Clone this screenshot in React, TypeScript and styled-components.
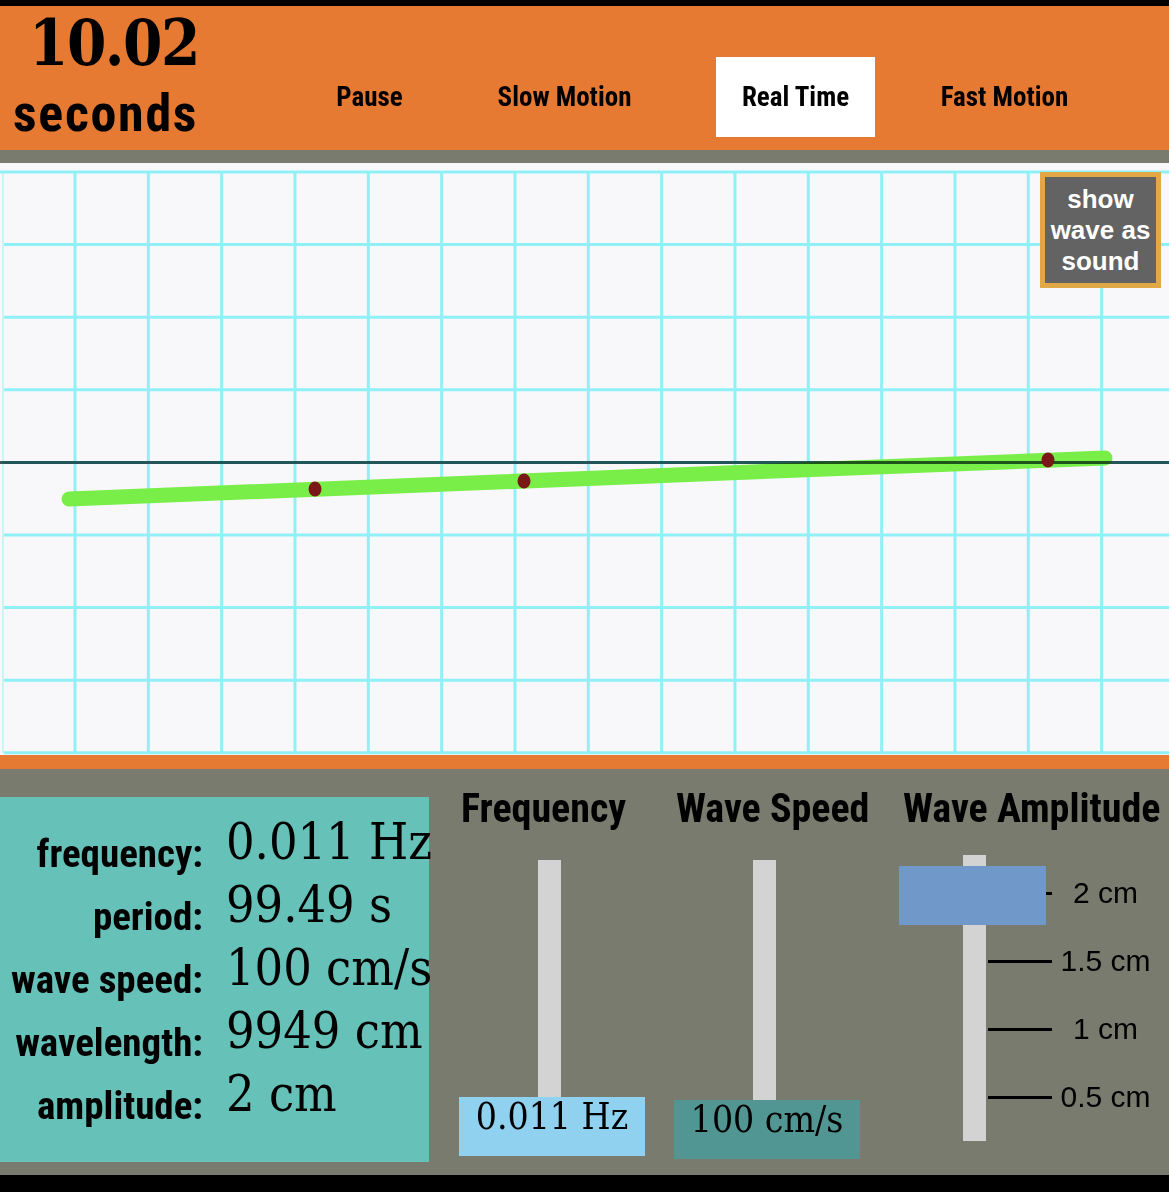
import styled, { createGlobalStyle } from "styled-components";

const NARROW = `"Roboto Condensed", "DejaVu Sans Condensed", "Liberation Sans", sans-serif`;
const SLAB = `"DejaVu Serif Condensed", "DejaVu Serif", "Liberation Serif", serif`;

const GlobalStyle = createGlobalStyle`
  html, body {
    margin: 0;
    padding: 0;
    background: #000;
  }
  body {
    width: 1169px;
    height: 1192px;
    overflow: hidden;
  }
`;

// grid geometry of the wave canvas
const GRID_COLS = Array.from({ length: 15 }, (_, i) => 75 + i * 73.33);
const GRID_ROWS = Array.from({ length: 9 }, (_, i) => 9 + i * 72.6);
const BEADS = [
  { x: 315, y: 326 },
  { x: 524, y: 318 },
  { x: 1048, y: 297 },
];

const readouts = [
  { label: "frequency:", value: "0.011 Hz" },
  { label: "period:", value: "99.49 s" },
  { label: "wave speed:", value: "100 cm/s" },
  { label: "wavelength:", value: "9949 cm" },
  { label: "amplitude:", value: "2 cm" },
];

const amplitudeTicks = ["2 cm", "1.5 cm", "1 cm", "0.5 cm"];

const App = () => {
  return (
    <Page>
      <GlobalStyle />
      <Header>
        <Clock>
          <Time>10.02</Time>
          <Unit>seconds</Unit>
        </Clock>
        <Nav>
          <NavButton>Pause</NavButton>
          <NavButton>Slow Motion</NavButton>
          <NavButton $active>Real Time</NavButton>
          <NavButton>Fast Motion</NavButton>
        </Nav>
      </Header>
      <Divider />
      <Stage>
        <WaveCanvas viewBox="0 0 1169 592" width="1169" height="592">
          <line x1="3" y1="9" x2="3" y2="590" stroke="#c8f6f8" strokeWidth="2" />
          {GRID_COLS.map((x) => (
            <line key={x} x1={x} y1="9" x2={x} y2="590" stroke="#8ff0f6" strokeWidth="3" />
          ))}
          {GRID_ROWS.map((y, i) => (
            <line key={y} x1={i === 0 ? 0 : 4} y1={y} x2="1169" y2={y} stroke="#8ff0f6" strokeWidth="3" />
          ))}
          <line x1="69" y1="336" x2="1105" y2="295" stroke="#79ee48" strokeWidth="15" strokeLinecap="round" />
          <line
            x1="0"
            y1="299.4"
            x2="1169"
            y2="299.4"
            stroke="#3d5b5b"
            strokeWidth="3"
            style={{ mixBlendMode: "multiply" }}
          />
          {BEADS.map((b) => (
            <ellipse key={b.x} cx={b.x} cy={b.y} rx="6.5" ry="7.5" fill="#7a1818" />
          ))}
        </WaveCanvas>
        <SoundButton>
          show
          <br />
          wave as
          <br />
          sound
        </SoundButton>
      </Stage>
      <Stripe />
      <Controls>
        <InfoCard>
          {readouts.map((r) => (
            <InfoRow key={r.label}>
              <InfoLabel>{r.label}</InfoLabel>
              <InfoValue>{r.value}</InfoValue>
            </InfoRow>
          ))}
        </InfoCard>

        <SliderGroup $width={186} $offset={30}>
          <SliderTitle>Frequency</SliderTitle>
          <Track $height={237} $offset={79} />
          <Thumb $color="#8fd1ef">0.011 Hz</Thumb>
        </SliderGroup>

        <SliderGroup $width={186} $offset={29}>
          <SliderTitle>Wave Speed</SliderTitle>
          <Track $height={240} $offset={79} />
          <Thumb $color="#529694">100 cm/s</Thumb>
        </SliderGroup>

        <SliderGroup $width={260} $offset={39}>
          <SliderTitle $indent={4}>Wave Amplitude</SliderTitle>
          <ScaleBody>
            <Track $height={286} $offset={64} $gap={22} />
            <TickList>
              {amplitudeTicks.map((t) => (
                <TickRow key={t}>
                  <TickMark />
                  <TickLabel>{t}</TickLabel>
                </TickRow>
              ))}
            </TickList>
            <AmpThumb />
          </ScaleBody>
        </SliderGroup>
      </Controls>
      <Footer />
    </Page>
  );
};

const Page = styled.div`
  width: 1169px;
  height: 1192px;
  display: flex;
  flex-direction: column;
  background: #787b6e;
`;

const Header = styled.header`
  height: 144px;
  border-top: 6px solid #000;
  background: #e77a32;
  display: flex;
  align-items: flex-start;
`;

const Clock = styled.div`
  width: 290px;
  padding: 6px 0 0 13px;
  box-sizing: border-box;
  display: flex;
  flex-direction: column;
`;

const Time = styled.div`
  margin-left: 16px;
  font-family: ${SLAB};
  font-stretch: semi-condensed;
  font-weight: 700;
  font-size: 63px;
  line-height: 63px;
  letter-spacing: -1.5px;
  color: #000;
`;

const Unit = styled.div`
  margin-top: 13px;
  font-family: ${NARROW};
  font-weight: 700;
  font-size: 52px;
  line-height: 52px;
  letter-spacing: 1.7px;
  color: #000;
`;

const Nav = styled.nav`
  margin-top: 51px;
  display: grid;
  grid-template-columns: 195px 231px 209px 159px;
`;

const NavButton = styled.div<{ $active?: boolean }>`
  width: 159px;
  height: 80px;
  display: flex;
  align-items: center;
  justify-content: center;
  background: ${(p) => (p.$active ? "#fff" : "transparent")};
  font-family: ${NARROW};
  font-weight: 700;
  font-size: 27px;
  color: #000;
  white-space: nowrap;
  cursor: pointer;
`;

const Divider = styled.div`
  height: 13px;
  background: #787b6e;
`;

const Stage = styled.div`
  position: relative;
  height: 592px;
  background: #f8f8fb;
`;

const WaveCanvas = styled.svg`
  display: block;
`;

const SoundButton = styled.div`
  position: absolute;
  top: 9px;
  right: 8px;
  width: 121px;
  height: 116px;
  box-sizing: border-box;
  border: 5px solid #e1a845;
  background: #636363;
  color: #fff;
  display: flex;
  align-items: center;
  justify-content: center;
  text-align: center;
  font-family: "Liberation Sans", sans-serif;
  font-weight: 700;
  font-size: 26px;
  line-height: 31px;
`;

const Stripe = styled.div`
  height: 14px;
  background: #e77a32;
`;

const Controls = styled.section`
  height: 406px;
  box-sizing: border-box;
  padding-top: 16px;
  display: flex;
  align-items: flex-start;
  background: #787b6e;
`;

const InfoCard = styled.div`
  margin-top: 12px;
  width: 429px;
  height: 365px;
  box-sizing: border-box;
  padding-top: 14px;
  background: #66c1b9;
  display: flex;
  flex-direction: column;
`;

const InfoRow = styled.div`
  height: 63px;
  display: grid;
  grid-template-columns: 203px auto;
  column-gap: 23px;
  align-items: start;
`;

const InfoLabel = styled.div`
  padding-top: 21px;
  text-align: right;
  font-family: ${NARROW};
  font-weight: 700;
  font-size: 39px;
  line-height: 44px;
  color: #000;
  white-space: nowrap;
`;

const InfoValue = styled.div`
  font-family: ${SLAB};
  font-stretch: semi-condensed;
  font-size: 50px;
  line-height: 63px;
  color: #000;
  white-space: nowrap;
`;

const SliderGroup = styled.div<{ $width: number; $offset: number }>`
  width: ${(p) => p.$width}px;
  margin-left: ${(p) => p.$offset}px;
  display: flex;
  flex-direction: column;
`;

const SliderTitle = styled.div<{ $indent?: number }>`
  height: 48px;
  padding-left: ${(p) => p.$indent ?? 2}px;
  font-family: ${NARROW};
  font-weight: 700;
  font-size: 40px;
  line-height: 48px;
  color: #000;
  white-space: nowrap;
`;

const Track = styled.div<{ $height: number; $offset: number; $gap?: number }>`
  width: 23px;
  height: ${(p) => p.$height}px;
  margin-top: ${(p) => p.$gap ?? 27}px;
  margin-left: ${(p) => p.$offset}px;
  background: #d3d3d3;
  flex-shrink: 0;
`;

const Thumb = styled.div<{ $color: string }>`
  height: 59px;
  background: ${(p) => p.$color};
  text-align: center;
  font-family: ${SLAB};
  font-stretch: semi-condensed;
  font-size: 37px;
  line-height: 40px;
  color: #000;
  white-space: nowrap;
`;

const ScaleBody = styled.div`
  position: relative;
  display: flex;
  align-items: flex-start;
`;

const TickList = styled.div`
  margin-top: 22px;
  padding-top: 4px;
  display: flex;
  flex-direction: column;
  flex: 1;
`;

const TickRow = styled.div`
  height: 68px;
  display: flex;
  align-items: center;
`;

const TickMark = styled.div`
  width: 64px;
  height: 3px;
  margin-left: 2px;
  background: #000;
`;

const TickLabel = styled.div`
  flex: 1;
  text-align: center;
  font-family: "Liberation Sans", sans-serif;
  font-size: 30px;
  color: #000;
  white-space: nowrap;
`;

// the amplitude handle sits on top of the track and first tick
const AmpThumb = styled.div`
  position: absolute;
  left: 0;
  top: 33px;
  width: 147px;
  height: 59px;
  background: #7098c9;
`;

const Footer = styled.div`
  height: 17px;
  background: #000;
`;

export default App;
